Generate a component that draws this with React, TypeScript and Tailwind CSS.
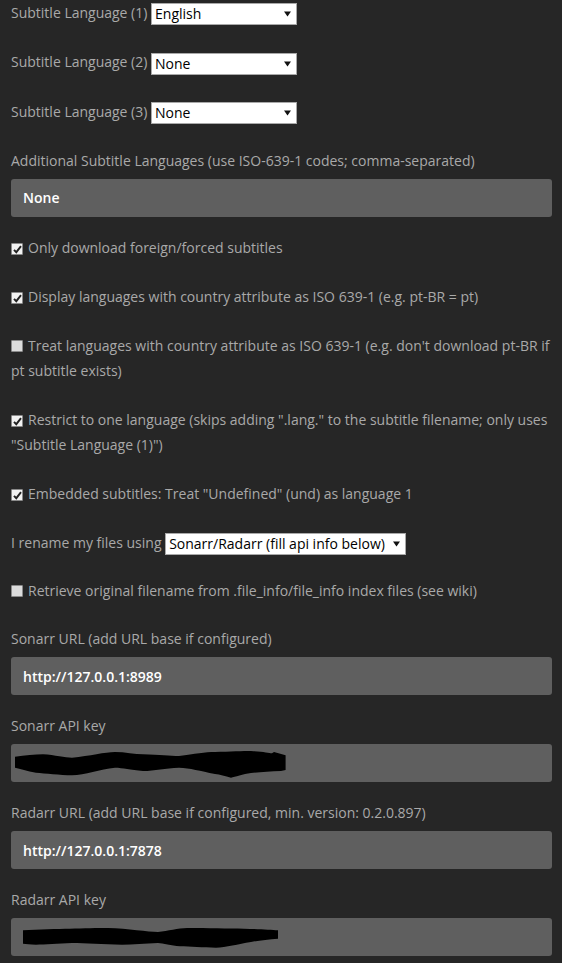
import React from 'react';

const FONT = { fontFamily: '"Open Sans", "Liberation Sans", sans-serif' };

function Select({ value, width }: { value: string; width: string }) {
  return (
    <span
      className={`inline-flex items-center h-[22px] ${width} bg-white border border-[#a9a9a9] pl-[3px] pr-[5px] text-black text-[14px] leading-[20px] align-middle whitespace-nowrap overflow-hidden`}
    >
      <span>{value}</span>
      <svg width="7" height="6" viewBox="0 0 7 6" className="ml-auto shrink-0">
        <path d="M0 0.5h7L3.5 5.5z" fill="#111" />
      </svg>
    </span>
  );
}

function Check({ checked }: { checked: boolean }) {
  return (
    <span
      className={`inline-flex items-center justify-center w-[12px] h-[12px] mr-[5px] border border-[#8a8a8a] rounded-[1px] align-[-1px] ${
        checked ? 'bg-[#f2f2f2]' : 'bg-[#dcdcdc]'
      }`}
    >
      {checked && (
        <svg width="9" height="9" viewBox="0 0 9 9">
          <path d="M1 4.8l2.3 2.4L8 1.2" stroke="#222" strokeWidth="1.9" fill="none" />
        </svg>
      )}
    </span>
  );
}

function CheckRow({ checked, children, className = 'mb-6' }: { checked: boolean; children: React.ReactNode; className?: string }) {
  return (
    <p className={`leading-[25px] ${className}`}>
      <Check checked={checked} />
      {children}
    </p>
  );
}

function Field({ label, children, last }: { label: string; children?: React.ReactNode; last?: boolean }) {
  return (
    <div className={last ? '' : 'mb-[18px]'}>
      <p className="leading-[25px] mb-[6px]">{label}</p>
      <div className="h-[38px] rounded-[3px] bg-[#5f5f5f] flex items-center px-3 text-white font-semibold text-[14px]">
        {children}
      </div>
    </div>
  );
}

function Scribble({ variant }: { variant: 1 | 2 }) {
  if (variant === 1) {
    return (
      <svg width="272" height="28" viewBox="0 0 272 28" className="-ml-2 mt-[3px]">
        <path
          d="M0 5.7 C10 4.5 20 3.3 28 3.3 C40 4 50 6.7 57 6.7 C75 5 90 1 100 1 C110 1 120 3.3 128 3.3 C145 4 155 5 164 5 C180 3 190 1 200 1 C215 0.5 228 0 236 0 C248 0.5 254 2 257 2.3 L259 1 L270.6 4.3 L270.6 19 L266 20 C255 20.5 244 21 236 22 C228 23 220 26 216 26.7 C210 25 205 23.5 200 23 C185 20 175 17 164 16.7 C150 17 140 20 128 20 C115 19 108 16.7 100 16.7 C85 18 70 24 57 24.3 C45 24 30 22.5 21 21.7 C12 20 5 18 0 16.7 Z"
          fill="#000"
        />
      </svg>
    );
  }
  return (
    <svg width="256" height="22" viewBox="0 0 256 22" className="mt-[1px]">
      <path
        d="M0 3.3 C15 2.5 35 1.7 47 1.7 C60 1.2 75 1 85 1 C105 1.5 125 5 135 5 C145 4 155 1 164 1 C185 1 205 1.5 221 1.7 C235 2 248 2.8 255 3.3 L255 11.7 C245 12.5 235 13.5 228 15 C215 17 203 20.5 193 20.7 C180 20.5 167 19.5 157 19.3 C148 18.5 140 16.5 135 16 C122 16.5 110 17.7 99 17.7 C80 17.5 62 16 49 16 C35 16.5 22 17.5 13 17.7 C7 17.5 3 17 0 16.7 Z"
        fill="#000"
      />
    </svg>
  );
}

export default function App() {
  return (
    <div className="min-h-[963px] w-full bg-[#262626] text-[#a9a9a9] text-[14px] pl-[11px] pr-[10px]" style={FONT}>
      <p className="leading-[25px] mb-6">
        Subtitle Language (1) <Select value="English" width="w-[146px]" />
      </p>
      <p className="leading-[25px] mb-6">
        Subtitle Language (2) <Select value="None" width="w-[146px]" />
      </p>
      <p className="leading-[25px] mb-6">
        Subtitle Language (3) <Select value="None" width="w-[146px]" />
      </p>

      <div className="mb-[18px]">
        <p className="leading-[25px] mb-[6px]">Additional Subtitle Languages (use ISO-639-1 codes; comma-separated)</p>
        <div className="h-[38px] rounded-[3px] bg-[#5f5f5f] flex items-center px-3 text-white font-semibold text-[14px]">
          None
        </div>
      </div>

      <CheckRow checked>Only download foreign/forced subtitles</CheckRow>
      <CheckRow checked>Display languages with country attribute as ISO 639-1 (e.g. pt-BR = pt)</CheckRow>
      <CheckRow checked={false}>
        Treat languages with country attribute as ISO 639-1 (e.g. don't download pt-BR if pt subtitle exists)
      </CheckRow>
      <CheckRow checked>
        Restrict to one language (skips adding ".lang." to the subtitle filename; only uses "Subtitle Language (1)")
      </CheckRow>
      <CheckRow checked>Embedded subtitles: Treat "Undefined" (und) as language 1</CheckRow>

      <p className="leading-[25px] mb-[23px] whitespace-nowrap">
        I rename my files using <Select value="Sonarr/Radarr (fill api info below)" width="w-[241px]" />
      </p>

      <CheckRow checked={false} className="mb-[23px]">
        Retrieve original filename from .file_info/file_info index files (see wiki)
      </CheckRow>

      <Field label="Sonarr URL (add URL base if configured)">http://127.0.0.1:8989</Field>
      <Field label="Sonarr API key">
        <Scribble variant={1} />
      </Field>
      <Field label="Radarr URL (add URL base if configured, min. version: 0.2.0.897)">http://127.0.0.1:7878</Field>
      <Field label="Radarr API key" last>
        <Scribble variant={2} />
      </Field>
    </div>
  );
}
